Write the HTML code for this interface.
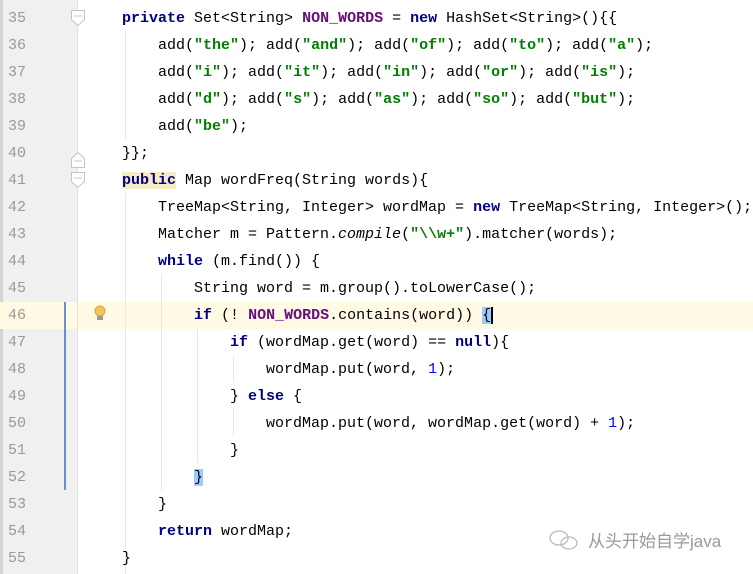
<!DOCTYPE html>
<html><head><meta charset="utf-8"><style>
html,body{margin:0;padding:0;}
body{width:753px;height:574px;position:relative;overflow:hidden;background:#fff;font-family:"Liberation Mono","Noto Sans CJK SC",monospace;font-size:15px;}
.gut{position:absolute;left:0;top:0;width:77px;height:574px;background:#f0f0f0;border-left:3px solid #d4d4d4;box-sizing:border-box;}
.gline{position:absolute;left:77px;top:0;width:1px;height:574px;background:#e2e2e2;}
.hl{position:absolute;left:0;top:302px;width:753px;height:27px;background:#fffae3;}
.ln{position:absolute;left:8px;color:#999;height:27px;line-height:27px;font-size:15px;}
.c{position:absolute;left:86px;white-space:pre;height:27px;line-height:27px;color:#000;}
.k{color:#000080;font-weight:bold;}
.s{color:#008000;font-weight:bold;}
.n{color:#0000ff;}
.f{color:#660e7a;font-weight:bold;}
.i{font-style:italic;}
.g{position:absolute;width:1px;background:#e8e8e8;}
.bm{background:#99ccff;}
.pub{background:#f5ebc4;}
</style></head><body>
<div class="gut"></div>
<div class="hl"></div>
<div class="gline"></div>
<div class="g" style="left:125px;top:31px;height:108px"></div>
<div class="g" style="left:125px;top:193px;height:381px"></div>
<div class="g" style="left:161px;top:274px;height:216px"></div>
<div class="g" style="left:197px;top:328px;height:135px"></div>
<div class="g" style="left:233px;top:355px;height:27px"></div>
<div class="g" style="left:233px;top:409px;height:27px"></div>
<div style="position:absolute;left:64px;top:302px;width:2px;height:188px;background:#6b8fc9"></div>
<svg style="position:absolute;left:0;top:0" width="753" height="574">
<g fill="#fff" stroke="#c4c4c4" stroke-width="1">
<path d="M71.5 10.5h13v9l-6.5 6l-6.5-6z"/><line x1="74" y1="16" x2="82" y2="16"/>
<path d="M71.5 167.5h13v-9l-6.5-6l-6.5 6z"/><line x1="74" y1="161" x2="82" y2="161"/>
<path d="M71.5 172.5h13v9l-6.5 6l-6.5-6z"/><line x1="74" y1="178" x2="82" y2="178"/>
</g>
<g><circle cx="100" cy="311" r="5" fill="#f2c55c" stroke="#d9a53a"/><rect x="97" y="316" width="6" height="4" fill="#999"/></g>
</svg>
<div class="ln" style="top:5px">35</div><div class="ln" style="top:32px">36</div><div class="ln" style="top:59px">37</div><div class="ln" style="top:86px">38</div><div class="ln" style="top:113px">39</div><div class="ln" style="top:140px">40</div><div class="ln" style="top:167px">41</div><div class="ln" style="top:194px">42</div><div class="ln" style="top:221px">43</div><div class="ln" style="top:248px">44</div><div class="ln" style="top:275px">45</div><div class="ln" style="top:302px">46</div><div class="ln" style="top:329px">47</div><div class="ln" style="top:356px">48</div><div class="ln" style="top:383px">49</div><div class="ln" style="top:410px">50</div><div class="ln" style="top:437px">51</div><div class="ln" style="top:464px">52</div><div class="ln" style="top:491px">53</div><div class="ln" style="top:518px">54</div><div class="ln" style="top:545px">55</div>
<div class="c" style="top:5px">    <span class="k">private</span> Set&lt;String&gt; <span class="f">NON_WORDS</span> = <span class="k">new</span> HashSet&lt;String&gt;(){{</div>
<div class="c" style="top:32px">        add(<span class="s">"the"</span>); add(<span class="s">"and"</span>); add(<span class="s">"of"</span>); add(<span class="s">"to"</span>); add(<span class="s">"a"</span>);</div>
<div class="c" style="top:59px">        add(<span class="s">"i"</span>); add(<span class="s">"it"</span>); add(<span class="s">"in"</span>); add(<span class="s">"or"</span>); add(<span class="s">"is"</span>);</div>
<div class="c" style="top:86px">        add(<span class="s">"d"</span>); add(<span class="s">"s"</span>); add(<span class="s">"as"</span>); add(<span class="s">"so"</span>); add(<span class="s">"but"</span>);</div>
<div class="c" style="top:113px">        add(<span class="s">"be"</span>);</div>
<div class="c" style="top:140px">    }};</div>
<div class="c" style="top:167px">    <span class="k pub">public</span> Map wordFreq(String words){</div>
<div class="c" style="top:194px">        TreeMap&lt;String, Integer&gt; wordMap = <span class="k">new</span> TreeMap&lt;String, Integer&gt;();</div>
<div class="c" style="top:221px">        Matcher m = Pattern.<span class="i">compile</span>(<span class="s">"\\w+"</span>).matcher(words);</div>
<div class="c" style="top:248px">        <span class="k">while</span> (m.find()) {</div>
<div class="c" style="top:275px">            String word = m.group().toLowerCase();</div>
<div class="c" style="top:302px">            <span class="k">if</span> (! <span class="f">NON_WORDS</span>.contains(word)) <span class="bm">{</span><span style="border-left:2px solid #000"></span></div>
<div class="c" style="top:329px">                <span class="k">if</span> (wordMap.get(word) == <span class="k">null</span>){</div>
<div class="c" style="top:356px">                    wordMap.put(word, <span class="n">1</span>);</div>
<div class="c" style="top:383px">                } <span class="k">else</span> {</div>
<div class="c" style="top:410px">                    wordMap.put(word, wordMap.get(word) + <span class="n">1</span>);</div>
<div class="c" style="top:437px">                }</div>
<div class="c" style="top:464px">            <span class="bm">}</span></div>
<div class="c" style="top:491px">        }</div>
<div class="c" style="top:518px">        <span class="k">return</span> wordMap;</div>
<div class="c" style="top:545px">    }</div>
<div style="position:absolute;left:548px;top:528px;width:32px;height:24px">
<svg width="32" height="24"><g fill="none" stroke="#bbb" stroke-width="1.3"><ellipse cx="11" cy="10" rx="9" ry="7"/><ellipse cx="21" cy="15" rx="8" ry="6"/></g></svg></div>
<div style="position:absolute;left:588px;top:527px;font-family:'Liberation Sans','Noto Sans CJK SC',sans-serif;font-size:17px;color:#999;white-space:nowrap">从头开始自学java</div>
</body></html>
